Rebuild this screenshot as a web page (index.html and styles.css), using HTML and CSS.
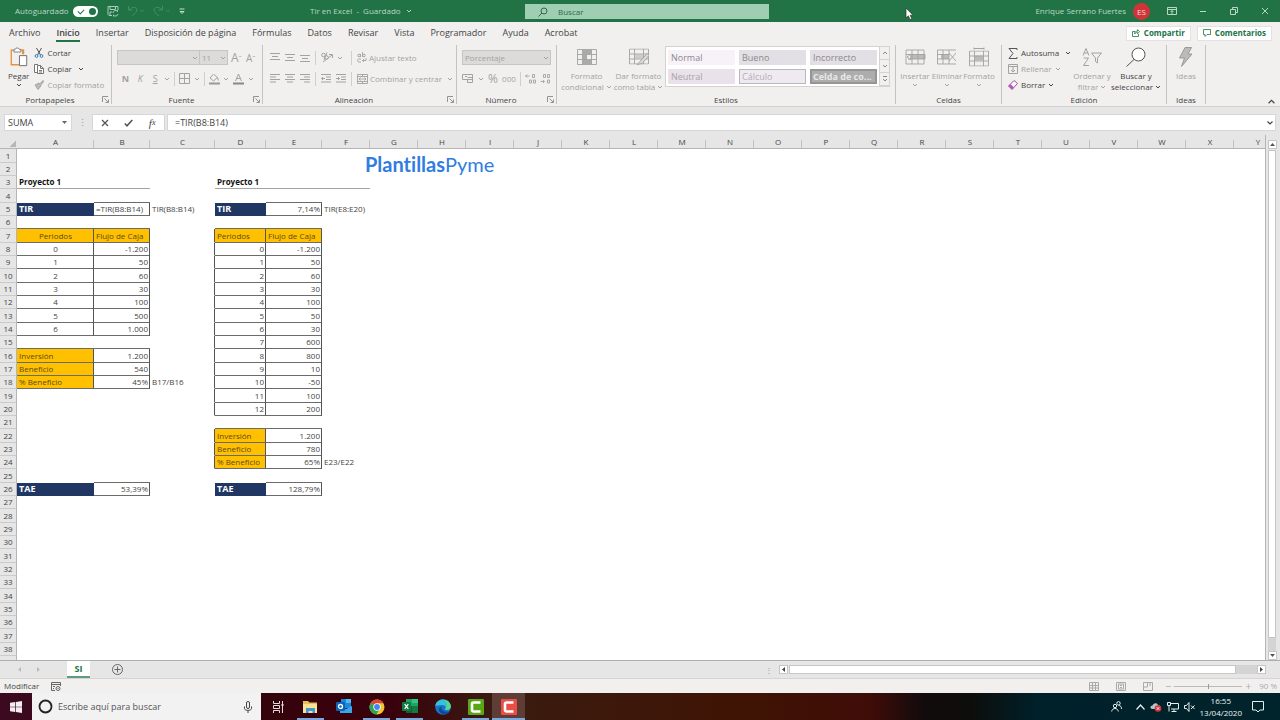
FILE: index.html
```html
<!DOCTYPE html>
<html lang="es">
<head>
<meta charset="utf-8">
<meta name="viewport" content="width=device-width, initial-scale=1">
<title>Tir en Excel</title>
<link rel="stylesheet" href="styles.css">
</head>
<body>
<svg class="defs" aria-hidden="true">
  <symbol id="car" viewBox="0 0 6 4"><path d="M1 1l2 2 2-2" fill="none" stroke="currentColor"/></symbol>
  <symbol id="launch" viewBox="0 0 7 7"><path d="M.5 6V.5H6M2.500 2.500l3.500 3.500M6.500 3.500v3h-3" fill="none" stroke="currentColor" stroke-width=".9"/></symbol>
  <symbol id="grid" viewBox="0 0 20 16"><path d="M.5.500h19v15H.5zM5.500.500v15M14.500.500v15M.5 5.500h19M.5 10.500h19" fill="none" stroke="currentColor" stroke-width=".9"/></symbol>
</svg>
<div class="app">
  <header class="titlebar">
    <div class="quick">
      <label class="auto">Autoguardado <input type="checkbox" class="switch" checked></label>
      <button aria-label="Guardar"><svg width="12" height="12" viewBox="0 0 12 12" fill="none" stroke="#a7cdb6"><path d="M5 10.500H2L1 9.500V1.500h10V5M3 1.500v3h5.500v-3M3 10V7h2M6 8a2.500 2.500 0 0 1 4.500-1.500V5M11 9a2.500 2.500 0 0 1-4.500 1v1.500"/></svg></button>
      <button class="dim" aria-label="Deshacer"><svg width="18" height="12" viewBox="0 0 18 12" fill="none" stroke="currentColor"><path d="M1.500 1v4h4M2 5c3-4 8-3 8 0 0 2-2 3-5 6M13.500 5l1.500 1.500L16.500 5"/></svg></button>
      <button class="dim" aria-label="Rehacer"><svg width="18" height="12" viewBox="0 0 18 12" fill="none" stroke="currentColor"><path d="M9.500 1v4h-4M9 5C6 1 1 2 1 5c0 2 2 3 5 6M13.500 5l1.500 1.500L16.500 5"/></svg></button>
      <button aria-label="Personalizar"><svg width="6" height="7" viewBox="0 0 6 7" fill="none" stroke="#c5dfce"><path d="M.5 1h5M1 3.500l2 2 2-2z"/></svg></button>
    </div>
    <button class="doc">Tir en Excel&nbsp; -&nbsp; Guardado <svg width="6" height="4"><use href="#car"/></svg></button>
    <label class="find"><svg width="10" height="10" viewBox="0 0 10 10" fill="none" stroke="#2c6b47"><circle cx="6" cy="4" r="3"/><path d="M4 6L.5 9.500"/></svg><input type="search" placeholder="Buscar" aria-label="Buscar"></label>
    <div class="window">
      <span>Enrique Serrano Fuertes</span><span class="avatar">ES</span>
      <button aria-label="Opciones de cinta"><svg width="10" height="8" viewBox="0 0 10 8" fill="none" stroke="#b8d8c4"><path d="M.5.500h9v7h-9zM.5 2.500h9M5 7V3.500M3.500 5L5 3.500 6.500 5"/></svg></button>
      <button aria-label="Minimizar"><svg width="8" height="8" viewBox="0 0 8 8" stroke="#b8d8c4"><path d="M1 4.500h6"/></svg></button>
      <button aria-label="Restaurar"><svg width="8" height="8" viewBox="0 0 8 8" fill="none" stroke="#b8d8c4"><path d="M.5 2.500h5v5h-5zM2.500 2V.5h5v5H6"/></svg></button>
      <button aria-label="Cerrar"><svg width="8" height="8" viewBox="0 0 8 8" stroke="#b8d8c4"><path d="M1 1l6 6M7 1L1 7"/></svg></button>
    </div>
    <svg class="pointer" width="9" height="14" viewBox="0 0 9 14"><path d="M1 1v10l2.300-2.200L5 12.500l1.800-.8L5.200 8.200H8z" fill="#fff" stroke="#333" stroke-width=".7"/></svg>
  </header>

  <nav class="tabs">
    <a href="#">Archivo</a><a href="#" class="on">Inicio</a><a href="#">Insertar</a><a href="#">Disposición de página</a><a href="#">Fórmulas</a><a href="#">Datos</a><a href="#">Revisar</a><a href="#">Vista</a><a href="#">Programador</a><a href="#">Ayuda</a><a href="#">Acrobat</a>
    <span class="fill"></span>
    <button class="pill"><svg width="8" height="8" viewBox="0 0 8 8" fill="none" stroke="currentColor" stroke-width=".8"><path d="M3 2.500H.5v5h6V5M2.500 5c0-2 1-2.800 3-2.800V.6L7.600 2.800 5.500 4.800V3.500C4 3.500 3 4 2.500 5z"/></svg>Compartir</button>
    <button class="pill"><svg width="8" height="8" viewBox="0 0 8 8" fill="none" stroke="currentColor" stroke-width=".8"><path d="M.5.500h7v5H4L2 7.500v-2H.5z"/></svg>Comentarios</button>
  </nav>

  <div class="ribbon">
    <section class="group clip">
      <div class="tools">
        <button class="big"><svg width="20" height="22" viewBox="0 0 20 22" fill="none"><path d="M3 3.500h-1.500v16H10M14 8V3.500h1.500" stroke="#e2953f" stroke-width="1.500"/><path d="M1.500 3.500h3M12 3.500h3V8" stroke="#e2953f" stroke-width="1.500"/><path d="M4.500 5.500v-3H6c0-2 4-2 4 0h2v3z" fill="#fff" stroke="#777"/><path d="M10.500 9.500h8v11h-8z" fill="#fff" stroke="#666"/></svg><span>Pegar</span><svg width="6" height="4"><use href="#car"/></svg></button>
        <div class="stack">
          <button><svg width="10" height="10" viewBox="0 0 10 10" fill="none"><path d="M2.500 0l4 7M7.500 0l-4 7" stroke="#555"/><circle cx="2.500" cy="8" r="1.400" stroke="#2f7fc4"/><circle cx="7.500" cy="8" r="1.400" stroke="#2f7fc4"/></svg>Cortar</button>
          <button><svg width="10" height="10" viewBox="0 0 10 10" fill="#fff" stroke="#666" stroke-width=".9"><path d="M3 8.500H.5v-8h3.500M3.500 1.500h3l3 3v5h-6zM6.500 1.500v3h3M5 6.500h3M5 8h3"/></svg>Copiar <svg class="gap" width="6" height="4"><use href="#car"/></svg></button>
          <button class="off"><svg width="10" height="10" viewBox="0 0 10 10" fill="#bbb" stroke="#999" stroke-width=".8"><path d="M1 5l4-2 2 3-3 3.500zM6 3.500L9 .5l.7 1L7 5"/></svg>Copiar formato</button>
        </div>
      </div>
      <footer>Portapapeles<svg width="7" height="7"><use href="#launch"/></svg></footer>
    </section>

    <section class="group font off">
      <div class="rows">
        <div class="line">
          <span class="combo wide"><select aria-label="Fuente"><option></option></select><svg width="6" height="4"><use href="#car"/></svg></span><span class="combo size"><select aria-label="Tamaño"><option>11</option></select><svg width="6" height="4"><use href="#car"/></svg></span>
          <button class="glyph">A<sup>ˆ</sup></button><button class="glyph small">A<sup>ˇ</sup></button>
        </div>
        <div class="line marks">
          <button><b>N</b></button><button><i>K</i></button><button><u>S</u></button><svg width="6" height="4"><use href="#car"/></svg><i class="bar"></i>
          <button aria-label="Bordes"><svg width="11" height="11" viewBox="0 0 11 11" fill="none" stroke="currentColor"><path d="M.5.500h10v10H.5zM5.500 1v9M1 5.500h9"/></svg></button><svg width="6" height="4"><use href="#car"/></svg><i class="bar"></i>
          <button aria-label="Relleno"><svg width="11" height="12" viewBox="0 0 11 12" fill="none" stroke="currentColor"><path d="M4.500 1L1 5l3.500 3L8.500 4.500 5 1.500M8.500 4.500l1 3" /><path d="M0 10.500h11" stroke="#999" stroke-width="2"/></svg></button><svg width="6" height="4"><use href="#car"/></svg>
          <button aria-label="Color de fuente"><svg width="11" height="12" viewBox="0 0 11 12" fill="none" stroke="currentColor"><path d="M2.500 8l3-7 3 7M3.500 5.500h4"/><path d="M0 10.500h11" stroke="#888" stroke-width="2"/></svg></button><svg width="6" height="4"><use href="#car"/></svg>
        </div>
      </div>
      <footer>Fuente<svg width="7" height="7"><use href="#launch"/></svg></footer>
    </section>

    <section class="group align off">
      <div class="rows">
        <div class="line">
          <svg width="10" height="9" viewBox="0 0 10 9" stroke="currentColor"><path d="M0 .5h10M2 3.500h6M0 6.500h10"/></svg>
          <svg width="10" height="9" viewBox="0 0 10 9" stroke="currentColor"><path d="M0 1.500h10M2 4.500h6M0 7.500h10"/></svg>
          <svg width="10" height="9" viewBox="0 0 10 9" stroke="currentColor"><path d="M0 2.500h10M2 5.500h6M0 8.500h10"/></svg><i class="bar"></i>
          <svg width="12" height="11" viewBox="0 0 12 11" fill="none" stroke="currentColor"><circle cx="2.500" cy="3" r="1.800"/><circle cx="5.500" cy="5.500" r="1.800"/><path d="M6 .5L3 8M2 10l9-7M8 2.500h3.500V6"/></svg><svg class="near" width="6" height="4"><use href="#car"/></svg><i class="bar push"></i>
          <button class="txt"><svg width="10" height="11" viewBox="0 0 10 11" fill="none" stroke="currentColor" stroke-width=".9"><circle cx="2" cy="3.500" r="1.300"/><path d="M3.500 2v3M5.500 0v5"/><circle cx="7" cy="3.500" r="1.300"/><path d="M4 7H2C0 7 0 10 2 10h2M9 6v2.500H5.500M7 7L5.500 8.500 7 10"/></svg>Ajustar texto</button>
        </div>
        <div class="line">
          <svg width="10" height="9" viewBox="0 0 10 9" stroke="currentColor"><path d="M0 .5h10M0 3h6M0 5.500h10M0 8h6"/></svg>
          <svg width="10" height="9" viewBox="0 0 10 9" stroke="currentColor"><path d="M0 .5h10M2 3h6M0 5.500h10M2 8h6"/></svg>
          <svg width="10" height="9" viewBox="0 0 10 9" stroke="currentColor"><path d="M0 .5h10M4 3h6M0 5.500h10M4 8h6"/></svg><i class="bar"></i>
          <svg width="10" height="9" viewBox="0 0 10 9" fill="none" stroke="currentColor"><path d="M0 .5h10M5 3h5M5 5.500h5M0 8h10M4 4.500H.5M2 3L.5 4.500 2 6"/></svg>
          <svg width="10" height="9" viewBox="0 0 10 9" fill="none" stroke="currentColor"><path d="M0 .5h10M5 3h5M5 5.500h5M0 8h10M0 4.500h3.500M2 3l1.500 1.500L2 6"/></svg><i class="bar"></i>
          <button class="txt"><svg width="11" height="10" viewBox="0 0 11 10" fill="none" stroke="currentColor" stroke-width=".9"><path d="M.5.500h10v9H.5zM.5 2.500h10M.5 7.500h10M5.500.500v2M5.500 7.500v2M2 5h7M3.500 3.500L2 5l1.500 1.500M7.500 3.500L9 5 7.500 6.500"/></svg>Combinar y centrar <svg class="gap" width="6" height="4"><use href="#car"/></svg></button>
        </div>
      </div>
      <footer>Alineación<svg width="7" height="7"><use href="#launch"/></svg></footer>
    </section>

    <section class="group num off">
      <div class="rows">
        <div class="line"><span class="combo"><select aria-label="Formato de número"><option>Porcentaje</option></select><svg width="6" height="4"><use href="#car"/></svg></span></div>
        <div class="line">
          <button aria-label="Moneda"><svg width="12" height="9" viewBox="0 0 12 9" fill="none" stroke="currentColor"><path d="M.5.500h10v5H.5zM5.500 5.500V8.500h5v-5h-5M3 2.500h2"/></svg></button><svg width="6" height="4"><use href="#car"/></svg>
          <button class="pct">%</button><button class="mil">000</button><i class="bar"></i>
          <button aria-label="Aumentar decimales"><svg width="11" height="10" viewBox="0 0 11 10" fill="none" stroke="currentColor" stroke-width=".9"><path d="M4.500 2H.5M2 .5L.5 2 2 3.500M7.500.500h2v3h-2zM4.500 6h2v3h-2zM8.500 6h2v3h-2z"/></svg></button>
          <button aria-label="Disminuir decimales"><svg width="11" height="10" viewBox="0 0 11 10" fill="none" stroke="currentColor" stroke-width=".9"><path d="M.5 7.500h4M3 6l1.500 1.500L3 9M3.500.500h2v3h-2zM7.500.500h2v3h-2zM7.500 6h2v3h-2z"/></svg></button>
        </div>
      </div>
      <footer>Número<svg width="7" height="7"><use href="#launch"/></svg></footer>
    </section>

    <section class="group styles">
      <div class="tools">
        <button class="big off"><svg width="20" height="16" viewBox="0 0 20 16"><path d="M6 1h8v4H6zM6 6h4v5H6zM6 11h8v4H6z" fill="#aaa"/><use href="#grid"/></svg><span>Formato<br>condicional <svg width="6" height="4"><use href="#car"/></svg></span></button>
        <button class="big off"><svg width="20" height="17" viewBox="0 0 20 17"><path d="M6 6h9v4H6z" fill="#ccc"/><use href="#grid" height="16"/><path d="M18 5l-7 8-3 3 5-1 7-8z" fill="#ddd" stroke="currentColor"/></svg><span>Dar formato<br>como tabla <svg width="6" height="4"><use href="#car"/></svg></span></button>
        <div class="gallery">
          <div class="swatches">
            <button class="s1">Normal</button><button class="s2">Bueno</button><button class="s2">Incorrecto</button>
            <button class="s3">Neutral</button><button class="s4">Cálculo</button><button class="s5">Celda de co...</button>
          </div>
          <div class="steps"><button aria-label="Arriba"><svg class="flip" width="6" height="4"><use href="#car"/></svg></button><button aria-label="Abajo"><svg width="6" height="4"><use href="#car"/></svg></button><button aria-label="Más"><svg width="6" height="6" viewBox="0 0 6 6" fill="none" stroke="currentColor"><path d="M1 .5h4M1 3l2 2 2-2"/></svg></button></div>
        </div>
      </div>
      <footer>Estilos</footer>
    </section>

    <section class="group cells off">
      <div class="tools">
        <button class="big"><svg width="21" height="16" viewBox="0 0 21 16"><path d="M5 5h15v5H5z" fill="#bbb"/><path d="M1 1h18v14H1zM7 1v14M13 1v14M1 5.500h19v4.500H3M6 5L2 8l4 3" fill="none" stroke="currentColor" stroke-width=".9"/></svg><span>Insertar</span><svg width="6" height="4"><use href="#car"/></svg></button>
        <button class="big"><svg width="20" height="16" viewBox="0 0 20 16"><path d="M4 5h8v5H4z" fill="#bbb"/><path d="M19 1H.5v14H19M6 1v14M12 1v14M.5 5.500H12M.5 10H12M12 4l7 8M19 4l-7 8" fill="none" stroke="currentColor" stroke-width=".9"/></svg><span>Eliminar</span><svg width="6" height="4"><use href="#car"/></svg></button>
        <button class="big"><svg width="20" height="19" viewBox="0 0 20 19"><path d="M6 8h8v5H6z" fill="#bbb"/><use href="#grid" y="3" height="16"/><path d="M5 1h10M5 0v2M15 0v2" stroke="currentColor"/></svg><span>Formato</span><svg width="6" height="4"><use href="#car"/></svg></button>
      </div>
      <footer>Celdas</footer>
    </section>

    <section class="group edit">
      <div class="tools">
        <div class="stack">
          <button><svg width="10" height="11" viewBox="0 0 10 11" fill="none" stroke="#555"><path d="M9 2V.5H1l4 5-4 5h8V9"/></svg>Autosuma <svg class="gap" width="6" height="4"><use href="#car"/></svg></button>
          <button class="off"><svg width="10" height="10" viewBox="0 0 10 10" fill="none" stroke="currentColor"><path d="M.5.500h9v9h-9zM.5 2.500h9M5 3v5M3 6l2 2 2-2"/></svg>Rellenar <svg width="6" height="4"><use href="#car"/></svg></button>
          <button><svg width="10" height="10" viewBox="0 0 10 10"><path d="M.5 6L6 .5l3.500 3L4 9.500z" fill="#fff" stroke="#a346a5"/><path d="M.5 6l2-2 3.500 3.500-2 2z" fill="#b657b8"/></svg>Borrar <svg width="6" height="4"><use href="#car"/></svg></button>
        </div>
        <button class="big off"><svg width="20" height="19" viewBox="0 0 20 19" fill="none" stroke="currentColor"><path d="M1 8l3-7 3 7M2 5.500h4M1.500 10.500h5l-5 7.500h5.500M9.500 5.500h10l-4 5v5l-2-1.500v-3.500z"/></svg><span>Ordenar y<br>filtrar <svg width="6" height="4"><use href="#car"/></svg></span></button>
        <button class="big"><svg width="20" height="20" viewBox="0 0 20 20" fill="#fff" stroke="#555"><circle cx="12.500" cy="7.500" r="6.500"/><path d="M8 12.500L.5 19.500"/></svg><span>Buscar y<br>seleccionar <svg width="6" height="4"><use href="#car"/></svg></span></button>
      </div>
      <footer>Edición</footer>
    </section>

    <section class="group ideas">
      <div class="tools"><button class="big off"><svg width="14" height="20" viewBox="0 0 14 20"><path d="M6 .5h6.500L9 7h4L2.500 19.500 5.500 11H.5z" fill="#bbb" stroke="#999"/></svg><span>Ideas</span></button></div>
      <footer>Ideas</footer>
    </section>
    <button class="fold" aria-label="Contraer la cinta"><svg class="flip" width="7" height="5" viewBox="0 0 6 4"><path d="M.5.500L3 3 5.500.500" fill="none" stroke="#444"/></svg></button>
  </div>

  <div class="formula">
    <label class="name"><input value="SUMA" aria-label="Cuadro de nombres"><svg width="5" height="3" viewBox="0 0 5 3"><path d="M0 0h5L2.500 3z" fill="#666"/></svg></label>
    <span class="dots">⋮</span>
    <div class="fx">
      <button aria-label="Cancelar"><svg width="8" height="8" viewBox="0 0 8 8" stroke="#555" stroke-width="1.300"><path d="M1 1l6 6M7 1L1 7"/></svg></button>
      <button aria-label="Introducir"><svg width="9" height="8" viewBox="0 0 9 8" fill="none" stroke="#555" stroke-width="1.600"><path d="M.8 4.500L3 6.800 8.300 1"/></svg></button>
      <button class="f">f<sub>x</sub></button>
    </div>
    <label class="expr"><input value="=TIR(B8:B14)" aria-label="Barra de fórmulas"><svg width="6" height="4" viewBox="0 0 6 4"><path d="M.5.500L3 3 5.500.500" fill="none" stroke="#444" stroke-width="1.200"/></svg></label>
  </div>

  <main class="work">
    <div class="sheet">
      <table>
        <colgroup><col class="c0"><col class="ca"><col class="cb"><col class="cc"><col class="cd"><col class="ce"><col span="20" class="cx"></colgroup>
        <thead><tr><th class="corner" aria-label="Seleccionar todo"></th><th>A</th><th>B</th><th>C</th><th>D</th><th>E</th><th>F</th><th>G</th><th>H</th><th>I</th><th>J</th><th>K</th><th>L</th><th>M</th><th>N</th><th>O</th><th>P</th><th>Q</th><th>R</th><th>S</th><th>T</th><th>U</th><th>V</th><th>W</th><th>X</th><th>Y</th></tr></thead>
        <tbody>
          <tr><th>1</th></tr>
          <tr><th>2</th></tr>
          <tr><th>3</th><td class="h">Proyecto 1</td><td class="h"></td><td></td><td class="h">Proyecto 1</td><td class="h"></td><td class="h"></td></tr>
          <tr><th>4</th><td></td><td class="u"></td><td></td><td></td><td class="u"></td></tr>
          <tr><th>5</th><td class="navy">TIR</td><td class="b">=TIR(B8:B14)</td><td>TIR(B8:B14)</td><td class="navy">TIR</td><td class="b n">7,14%</td><td>TIR(E8:E20)</td></tr>
          <tr><th>6</th><td class="u"></td><td class="u"></td><td></td><td class="u"></td><td class="u"></td></tr>
          <tr><th>7</th><td class="b y m">Periodos</td><td class="b y">Flujo de Caja</td><td class="r"></td><td class="b y">Periodos</td><td class="b y">Flujo de Caja</td></tr>
          <tr><th>8</th><td class="b m">0</td><td class="b n">-1.200</td><td class="r"></td><td class="b n">0</td><td class="b n">-1.200</td></tr>
          <tr><th>9</th><td class="b m">1</td><td class="b n">50</td><td class="r"></td><td class="b n">1</td><td class="b n">50</td></tr>
          <tr><th>10</th><td class="b m">2</td><td class="b n">60</td><td class="r"></td><td class="b n">2</td><td class="b n">60</td></tr>
          <tr><th>11</th><td class="b m">3</td><td class="b n">30</td><td class="r"></td><td class="b n">3</td><td class="b n">30</td></tr>
          <tr><th>12</th><td class="b m">4</td><td class="b n">100</td><td class="r"></td><td class="b n">4</td><td class="b n">100</td></tr>
          <tr><th>13</th><td class="b m">5</td><td class="b n">500</td><td class="r"></td><td class="b n">5</td><td class="b n">50</td></tr>
          <tr><th>14</th><td class="b m">6</td><td class="b n">1.000</td><td class="r"></td><td class="b n">6</td><td class="b n">30</td></tr>
          <tr><th>15</th><td class="u"></td><td class="u"></td><td class="r"></td><td class="b n">7</td><td class="b n">600</td></tr>
          <tr><th>16</th><td class="b y">Inversión</td><td class="b n">1.200</td><td class="r"></td><td class="b n">8</td><td class="b n">800</td></tr>
          <tr><th>17</th><td class="b y">Beneficio</td><td class="b n">540</td><td class="r"></td><td class="b n">9</td><td class="b n">10</td></tr>
          <tr><th>18</th><td class="b y">% Beneficio</td><td class="b n">45%</td><td class="r">B17/B16</td><td class="b n">10</td><td class="b n">-50</td></tr>
          <tr><th>19</th><td></td><td></td><td class="r"></td><td class="b n">11</td><td class="b n">100</td></tr>
          <tr><th>20</th><td></td><td></td><td class="r"></td><td class="b n">12</td><td class="b n">200</td></tr>
          <tr><th>21</th><td></td><td></td><td></td><td class="u"></td><td class="u"></td></tr>
          <tr><th>22</th><td></td><td></td><td class="r"></td><td class="b y">Inversión</td><td class="b n">1.200</td></tr>
          <tr><th>23</th><td></td><td></td><td class="r"></td><td class="b y">Beneficio</td><td class="b n">780</td></tr>
          <tr><th>24</th><td></td><td></td><td class="r"></td><td class="b y">% Beneficio</td><td class="b n">65%</td><td>E23/E22</td></tr>
          <tr><th>25</th><td></td><td class="u"></td><td></td><td></td><td class="u"></td></tr>
          <tr><th>26</th><td class="navy">TAE</td><td class="b n">53,39%</td><td></td><td class="navy">TAE</td><td class="b n">128,79%</td></tr>
          <tr><th>27</th></tr><tr><th>28</th></tr><tr><th>29</th></tr><tr><th>30</th></tr><tr><th>31</th></tr><tr><th>32</th></tr><tr><th>33</th></tr><tr><th>34</th></tr><tr><th>35</th></tr><tr><th>36</th></tr><tr><th>37</th></tr><tr><th>38</th></tr><tr><th></th></tr>
        </tbody>
      </table>
      <div class="brand"><b>Plantillas</b>Pyme</div>
    </div>
    <div class="vscroll"><button aria-label="Subir"><svg class="flip" width="5" height="3" viewBox="0 0 5 3"><path d="M0 0h5L2.500 3z" fill="#555"/></svg></button><div class="thumb"></div><div class="track"></div><button aria-label="Bajar"><svg width="5" height="3" viewBox="0 0 5 3"><path d="M0 0h5L2.500 3z" fill="#555"/></svg></button></div>
  </main>

  <div class="sheets">
    <div class="nav"><button aria-label="Anterior"><svg width="3" height="5" viewBox="0 0 3 5"><path d="M3 0v5L0 2.500z" fill="#bbb"/></svg></button><button aria-label="Siguiente"><svg width="3" height="5" viewBox="0 0 3 5"><path d="M0 0v5l3-2.500z" fill="#bbb"/></svg></button></div>
    <button class="tab">SI</button>
    <button class="add" aria-label="Nueva hoja"><svg width="11" height="11" viewBox="0 0 11 11" fill="none" stroke="#666"><circle cx="5.500" cy="5.500" r="5"/><path d="M5.500 2.500v6M2.500 5.500h6"/></svg></button>
    <span class="dots">⋮</span>
    <div class="hscroll"><button aria-label="Izquierda"><svg width="3" height="5" viewBox="0 0 3 5"><path d="M3 0v5L0 2.500z" fill="#444"/></svg></button><div class="thumb"></div><div class="track"></div><button aria-label="Derecha"><svg width="3" height="5" viewBox="0 0 3 5"><path d="M0 0v5l3-2.500z" fill="#444"/></svg></button></div>
  </div>

  <div class="status">
    <span>Modificar</span>
    <svg width="10" height="9" viewBox="0 0 10 9" fill="none" stroke="#666"><path d="M4 8.500H.5v-8h9V4M.5 2.500h9M2 4.500h2M2 6.500h1"/><circle cx="7" cy="6.500" r="2"/><path d="M6.500 6.500h1"/></svg>
    <span class="fill"></span>
    <button aria-label="Normal"><svg width="10" height="9" viewBox="0 0 10 9" fill="none" stroke="#aaa"><path d="M.5.500h9v8h-9zM3.500.500v8M6.500.500v8M.5 3.500h9M.5 6h9"/></svg></button>
    <button aria-label="Diseño de página"><svg width="10" height="9" viewBox="0 0 10 9" fill="none" stroke="#aaa"><path d="M.5.500h9v8h-9zM2.500 2h5v5h-5zM4 3.500h2M4 5.500h2"/></svg></button>
    <button aria-label="Salto de página"><svg width="10" height="9" viewBox="0 0 10 9" fill="none" stroke="#aaa"><path d="M.5.500h9v8h-9zM.5 5h4V.5M7 .5V4"/></svg></button>
    <div class="zoom"><span>−</span><input type="range" min="10" max="190" value="100" aria-label="Zoom"><span>+</span></div>
    <span class="level">90 %</span>
  </div>

  <footer class="taskbar">
    <button class="start" aria-label="Inicio"><svg width="12" height="12" viewBox="0 0 12 12" fill="#f4eef1"><path d="M0 1.800L5.300 1v4.700H0zM6 .9L12 0v5.700H6zM0 6.300h5.300V11L0 10.200zM6 6.300h6V12l-6-.9z"/></svg></button>
    <label class="cortana"><svg width="15" height="15" viewBox="0 0 15 15" fill="none" stroke="#222" stroke-width="1.800"><circle cx="7.500" cy="7.500" r="6"/></svg><input placeholder="Escribe aquí para buscar" aria-label="Escribe aquí para buscar"><svg width="8" height="12" viewBox="0 0 8 12" fill="none" stroke="#444"><rect x="2.500" y=".5" width="3" height="7" rx="1.500"/><path d="M.5 5.500v2C.5 10 7.500 10 7.500 7.500v-2M4 9.500V12"/></svg></label>
    <button class="app-i" aria-label="Vista de tareas"><svg width="12" height="12" viewBox="0 0 12 12" fill="none" stroke="#ddd"><path d="M1.500 0v2.500h6V0M1.500 12V9.500h6V12M1.500 4.500h6v3h-6zM10.500 0v12M9 4h3"/></svg></button>
    <button class="app-i run" aria-label="Explorador"><svg width="15" height="14" viewBox="0 0 15 14"><path d="M0 1h5l1.500 1.500H14V12H0z" fill="#e9bd58"/><path d="M0 4h14v9H0z" fill="#fbe193"/><path d="M3 13V8h9v5H9.500v-2h-4v2z" fill="#3c9bd6"/></svg></button>
    <button class="app-i" aria-label="Outlook"><svg width="16" height="15" viewBox="0 0 16 15"><path d="M5 0h10v9H5z" fill="#1c88dc"/><path d="M10 0h5v4h-5z" fill="#4dbcf4"/><path d="M4 7l6 3 6-3v7H4z" fill="#37a6ea"/><rect y="3" width="9" height="9" rx="1" fill="#0c63b8"/><circle cx="4.500" cy="7.500" r="2" fill="none" stroke="#fff" stroke-width="1.300"/></svg></button>
    <button class="app-i run" aria-label="Chrome"><svg width="16" height="16" viewBox="0 0 16 16"><circle cx="8" cy="8" r="7.500" fill="#f4c430"/><path d="M8 8L1.500 4.200A7.500 7.500 0 0 1 14.500 4.200H8z" fill="#dc4437"/><path d="M1.500 4.200A7.500 7.500 0 0 0 7.300 15.500L11 9.500 8 8z" fill="#2fa355"/><circle cx="8" cy="8" r="3.700" fill="#fff"/><circle cx="8" cy="8" r="2.900" fill="#4285f4"/></svg></button>
    <button class="app-i run" aria-label="Excel"><svg width="16" height="15" viewBox="0 0 16 15"><path d="M4 0h12v14H4z" fill="#21a366"/><path d="M10 0h6v4h-6z" fill="#33c481"/><path d="M4 7h6v7H4z" fill="#185c37"/><path d="M10 7h6v7h-6z" fill="#107c41"/><rect y="3" width="9" height="9" rx="1" fill="#107c41"/><path d="M2.700 5.200l3.600 4.600M6.300 5.200L2.700 9.800" stroke="#fff" stroke-width="1.200"/></svg></button>
    <button class="app-i" aria-label="Edge"><svg width="16" height="16" viewBox="0 0 16 16"><circle cx="8" cy="8" r="7.800" fill="#1b72c9"/><path d="M.3 7C1-1 14-2 15.800 7c.2 3-3 4.500-6 3.500 2-2 .5-4.500-2.500-4.500S1.500 7 .3 7z" fill="#35c1d6"/><path d="M10 1c4 1 6 4 5.800 7-.5 2.500-3 3.500-6 2.500 3-3 3-6 .2-9.500z" fill="#5bd68b"/><path d="M6.500 7.500c-1 3 2 6 7 5-3 4-8.500 3-9.500-1-.5-2 .8-3.500 2.500-4z" fill="#0c4a94"/></svg></button>
    <button class="app-i run" aria-label="Camtasia"><svg width="16" height="16" viewBox="0 0 16 16"><rect width="16" height="16" rx="1" fill="#5aa614"/><path d="M12.500 3.500H5.500a1.500 1.500 0 0 0-1.500 1.500v6a1.500 1.500 0 0 0 1.500 1.500h7" fill="none" stroke="#fff" stroke-width="2.600"/></svg></button>
    <button class="app-i run live" aria-label="Grabadora"><svg width="16" height="16" viewBox="0 0 16 16"><rect width="16" height="16" rx="1" fill="#ea4c46"/><path d="M12.500 3.500H5.500a1.500 1.500 0 0 0-1.500 1.500v6a1.500 1.500 0 0 0 1.500 1.500h7" fill="none" stroke="#fff" stroke-width="2.600"/></svg></button>
    <span class="fill"></span>
    <div class="tray">
      <svg class="people" width="11" height="11" viewBox="0 0 11 11" fill="none" stroke="#e6eef0"><circle cx="4" cy="5" r="1.700"/><path d="M.7 10.500C1 6.500 7 6.500 7.300 10.500"/><circle cx="7.500" cy="2.300" r="1.700"/><path d="M7.500 4.500c2 0 3 1 3 3.500"/></svg>
      <svg width="9" height="6" viewBox="0 0 9 6" fill="none" stroke="#e6eef0" stroke-width="1.200"><path d="M.5 5.500l4-4.500 4 4.500"/></svg>
      <svg width="12" height="10" viewBox="0 0 12 10"><path d="M2.500 7C-.5 7 0 3.500 2.500 3.500 3 1 7 0 8 3c3 0 3 4 0 4z" fill="#b9c3c7"/><circle cx="8" cy="6.500" r="3.300" fill="#d9343c"/><path d="M6.800 5.300l2.400 2.400M9.200 5.300L6.800 7.700" stroke="#fff"/></svg>
      <svg width="12" height="10" viewBox="0 0 12 10" fill="none" stroke="#e6eef0"><path d="M4 1.500h7.500v5.500H4M7 7v2.500M4.500 9.500h5M.5.500h3v3h-3zM2 3.500v6"/></svg>
      <svg width="11" height="10" viewBox="0 0 11 10" fill="none" stroke="#e6eef0"><path d="M.5 3.500h2l2.500-3v9l-2.500-3h-2zM7 3.500l3.500 3.500M10.500 3.500L7 7"/></svg>
      <time>16:55<br>13/04/2020</time>
      <svg width="12" height="12" viewBox="0 0 12 12" fill="none" stroke="#e6eef0"><path d="M.5.500h11v8.500H8L6 11 4 9H.5z"/></svg>
    </div>
  </footer>
</div>
</body>
</html>
```
FILE: styles.css
```css
* { box-sizing: border-box; }
body { margin: 0; font: 8px/12px "Open Sans", "Noto Sans", sans-serif; color: #444; overflow: hidden; }
button, input, select { font: inherit; color: inherit; border: 0; padding: 0; margin: 0; background: none; outline: 0; min-width: 0; }
button { display: flex; align-items: center; justify-content: center; white-space: nowrap; }
a { color: inherit; text-decoration: none; }
svg { flex: none; }
.defs { position: absolute; width: 0; height: 0; }
.fill { flex: 1; }
.flip { transform: rotate(180deg); }
.off { color: #a3a2a1; }
.app { display: flex; flex-direction: column; height: 100vh; }

/* Title bar */
.titlebar { position: relative; flex: none; display: grid; grid-template-columns: 310px 215px 244px 1fr; align-items: center; height: 22px; background: #217346; color: #b9d8c5; }
.quick { display: flex; align-items: center; gap: 8px; padding-left: 15px; }
.auto { display: flex; align-items: center; gap: 4px; margin-right: 1px; }
.switch { appearance: none; position: relative; width: 25px; height: 11px; border-radius: 6px; background: #fff; }
.switch::before { content: ""; position: absolute; left: 6px; top: 2px; width: 3px; height: 5px; border: solid #217346; border-width: 0 1px 1px 0; transform: rotate(45deg); }
.switch::after { content: ""; position: absolute; right: 2px; top: 2px; width: 7px; height: 7px; border-radius: 50%; background: #217346; }
.dim { color: #498c66; }
.doc { gap: 5px; justify-content: flex-start; }
.find { display: flex; align-items: center; gap: 10px; height: 15px; margin-top: 1px; padding-left: 13px; background: #a0ceb2; color: #2c6b47; }
.find input { flex: 1; appearance: none; }
input::placeholder { color: inherit; opacity: 1; }
.window { display: flex; align-items: center; justify-content: flex-end; padding-right: 11px; }
.window button { width: 31px; }
.window button:last-child { width: 8px; margin-left: 12px; }
.avatar { width: 17px; height: 17px; margin: 0 6px 0 7px; border-radius: 50%; background: #d13438; color: #f6dcdc; line-height: 17px; text-align: center; }
.pointer { position: absolute; left: 905px; top: 7px; }

/* Ribbon tabs */
.tabs { flex: none; display: flex; align-items: center; gap: 16px; height: 22px; padding: 0 8px 0 9px; background: #f1f0ef; font-size: 9px; }
.tabs a { height: 18px; padding-top: 3px; border-bottom: 2px solid transparent; white-space: nowrap; }
.tabs .on { font-weight: 600; border-color: #217346; }
.pill { gap: 4px; height: 15px; margin-left: -10px; padding: 0 5px; background: #fff; border: 1px solid #e3e2e1; color: #217346; font-size: 8px; font-weight: 700; }

/* Ribbon */
.ribbon { position: relative; flex: none; display: flex; height: 63px; background: #f1f0ef; border-bottom: 1px solid #d2d1d0; }
.group { flex: none; display: flex; flex-direction: column; margin: 1px 0 2px; border-right: 1px solid #c4c3c2; }
.group > footer { position: relative; height: 9px; line-height: 9px; text-align: center; color: #444; }
.group > footer svg { position: absolute; right: 2px; top: 1px; color: #888; }
.clip > footer, .font > footer, .align > footer, .num > footer { padding-right: 11px; }
.clip { width: 112px; }
.font { width: 151px; }
.align { width: 194px; }
.num { width: 100px; }
.styles { width: 339px; }
.cells { width: 106px; }
.edit { width: 165px; }
.ideas { width: 39px; }
.tools { flex: 1; display: flex; }
.big { flex-direction: column; justify-content: flex-start; height: 46px; padding-top: 2px; line-height: 11px; }
.big > svg:first-child { flex: none; height: 20px; margin-bottom: 3px; }
.big > span + svg { margin-top: 2px; }
.big span svg { margin-bottom: 1px; }
.stack { display: flex; flex-direction: column; }
.stack button { gap: 3px; height: 16px; justify-content: flex-start; }
.gap { margin-left: 3px; }
.clip .tools { padding-left: 8px; gap: 5px; }
.rows { flex: 1; display: flex; flex-direction: column; gap: 6px; padding-top: 5px; }
.line { display: flex; align-items: center; height: 15px; }
.bar { flex: none; width: 1px; height: 14px; background: #d0cfce; }
.combo { position: relative; display: flex; height: 15px; background: #dcdbda; border: 1px solid #c6c5c4; }
.combo select { flex: 1; appearance: none; padding-left: 2px; opacity: 1; }
.combo svg { position: absolute; right: 1px; top: 5px; }
.wide { width: 83px; }
.size { width: 29px; margin-left: -1px; }
.font .rows { padding-left: 5px; }
.glyph { margin-left: 3px; font-size: 12px; }
.glyph.small { font-size: 10px; margin-left: 4px; }
.glyph sup { font-size: 8px; line-height: 8px; }
.marks { justify-content: space-between; padding: 0 8px 0 3px; font-size: 9px; }
.marks button { width: 11px; }
.align .line { gap: 5px; padding-left: 7px; }
.align .push { margin-left: 3px; }
.align .near { margin-left: -1px; }
.txt { gap: 2px; }
.num .rows { padding: 5px 5px 0; }
.num .combo { flex: 1; }
.num .line { justify-content: space-between; }
.pct { font-size: 12px; }
.styles .tools { padding-left: 4px; gap: 1px; }
.styles .big { width: 51px; }
.gallery { display: flex; height: 41px; margin: 1px 0 0; border: 1px solid #d4d3d2; background: #fff; }
.swatches { display: grid; grid-template-columns: repeat(3, 67px); gap: 4px; padding: 3px 2px; color: #8b888c; font-size: 9px; }
.swatches button { height: 15px; padding-left: 3px; justify-content: flex-start; }
.s1 { background: #f7f1f8; }
.s2 { background: #e2e0e4; }
.swatches .s3 { background: #e9e2ea; color: #a8a3aa; }
.swatches .s4 { background: #efeaf1; border: 1px solid #bbb8bc; color: #b3aeb4; padding-left: 2px; }
.swatches .s5 { background: #aeadae; border: 2px solid #969596; color: #e8e8e8; font-weight: 700; padding-left: 1px; }
.steps { display: grid; grid-template-rows: repeat(3, 1fr); width: 10px; background: #f1f0ef; color: #888; }
.steps button { border-left: 1px solid #d4d3d2; border-bottom: 1px solid #d4d3d2; }
.cells .tools { padding-left: 3px; }
.cells .big { width: 32px; }
.edit .tools { padding-left: 6px; }
.edit .big { width: 44px; }
.edit .stack { width: 62px; }
.ideas .tools { justify-content: center; }
.fold { position: absolute; right: 5px; bottom: 2px; }

/* Formula bar */
.formula { flex: none; display: flex; align-items: center; height: 28px; padding: 3px 4px 0; background: #e6e6e6; font-size: 9px; }
.name, .fx, .expr { display: flex; align-items: center; height: 17px; background: #fff; border: 1px solid #d6d6d6; }
.name { width: 68px; padding: 0 4px 0 3px; }
.name input { flex: 1; width: 40px; }
.dots { width: 20px; text-align: center; color: #999; }
.fx { width: 73px; }
.fx button { flex: 1; }
.f { font: italic 11px "Liberation Serif", serif; }
.f sub { font-size: 8px; }
.expr { flex: 1; margin-left: 2px; padding: 0 2px 0 7px; }
.expr input { flex: 1; }

/* Worksheet */
.work { flex: 1; min-height: 0; display: flex; background: #e6e6e6; }
.sheet { position: relative; flex: 1; overflow: hidden; background: #fff; border-right: 1px solid #b5b5b5; }
table { table-layout: fixed; width: 1282px; border-spacing: 0; }
.c0 { width: 17px; } .ca { width: 77px; } .cb, .ce { width: 56px; } .cc { width: 65px; } .cd { width: 51px; } .cx { width: 48px; }
th, td { height: 13px; padding: 0; line-height: 12px; white-space: nowrap; }
tbody tr:nth-child(3n+1) > * { height: 14px; }
thead th { height: 14px; background: linear-gradient(#c2c2c2, #c2c2c2) right 5px / 1px 9px no-repeat #e6e6e6; border-bottom: 1px solid #b5b5b5; font-weight: 400; }
thead .corner { background: linear-gradient(135deg, transparent 50%, #b7b7b7 50%) 9px 5px / 7px 7px no-repeat #e6e6e6; }
tbody th { background: #e6e6e6; border-right: 1px solid #b5b5b5; border-bottom: 1px solid #cbcbcb; font-weight: 400; }
td { padding: 0 1px 0 2px; border-bottom: 1px solid transparent; }
.h { color: #111; font-weight: 700; border-bottom: 1px solid #a5a5a5; }
.u { border-bottom: 1px solid #6b6b6b; }
.r { border-right: 1px solid #555; }
.b { border-right: 1px solid #555; border-bottom: 1px solid #6b6b6b; }
.n { text-align: right; }
.m { text-align: center; }
.y { background: #ffc000; color: #5c4a17; }
.navy { background: #203764; color: #fff; font-size: 9px; font-weight: 700; }
.brand { position: absolute; left: 365px; top: 17px; font: 20px/24px Lato, sans-serif; font-variant-ligatures: none; color: #2f7de1; }
.vscroll { display: flex; flex-direction: column; width: 14px; padding: 5px 4px 0 2px; }
.vscroll button, .hscroll button { flex: none; width: 9px; height: 9px; background: #fff; border: 1px solid #c6c6c6; }
.vscroll .thumb { flex: 1; margin-top: 1px; background: #fff; border: 1px solid #c6c6c6; }
.vscroll .track { height: 13px; background: #d4d4d4; }

/* Sheet tabs */
.sheets { flex: none; display: flex; align-items: center; height: 19px; padding-right: 14px; background: #e6e6e6; border-top: 1px solid #a9b3ab; border-bottom: 1px solid #d4d4d4; }
.nav { display: flex; gap: 16px; width: 67px; padding-left: 18px; }
.tab { align-self: flex-start; width: 23px; height: 17px; background: #fff; border-bottom: 2px solid #5e9c7a; color: #217346; font-size: 9px; font-weight: 700; }
.add { margin: 0 auto 0 22px; }
.hscroll { display: flex; width: 38.5%; height: 9px; }
.hscroll .thumb { flex: 1; margin-left: 1px; background: #fff; border: 1px solid #c6c6c6; }
.hscroll .track { width: 21px; background: #d4d4d4; }

/* Status bar */
.status { flex: none; display: flex; align-items: center; height: 14px; padding: 0 3px 0 4px; background: #f1f0ef; }
.status > svg { margin-left: 12px; }
.status button { margin-right: 17px; }
.zoom { display: flex; align-items: center; gap: 3px; margin-left: -4px; color: #aaa; font-size: 10px; }
.zoom input { appearance: none; width: 68px; height: 9px; background: linear-gradient(#bbb, #bbb) 0 4px / 100% 1px no-repeat; }
.zoom input::-webkit-slider-thumb { appearance: none; width: 1px; height: 5px; background: #999; }
.level { margin-left: 8px; color: #aaa; }

/* Taskbar */
.taskbar { flex: none; display: flex; align-items: stretch; height: 27px; background: linear-gradient(90deg, #3b0a20 0, #35030c 21%, #38000c 30%, #3a1c10 39%, #3f1404 58%, #400c08 68%, #130b0c 72%, #0c0e0c 76%, #00202a 81%, #00242c); color: #eef4f5; }
.start { width: 32px; }
.cortana { display: flex; align-items: center; width: 229px; padding: 0 9px 0 6px; background: #f2f2f2; color: #555; font-size: 9px; }
.cortana input { flex: 1; margin-left: 5px; }
.app-i { position: relative; width: 33px; }
.run::after { content: ""; position: absolute; left: 3px; right: 3px; bottom: 0; height: 2px; background: #7ba7dc; }
.live { background: #5d3d35; }
.live::after { left: 0; right: 0; }
.tray { display: flex; align-items: center; gap: 5px; padding-right: 16px; }
.tray .people { margin-right: 9px; }
.tray time { margin: 0 5px 0 0; text-align: center; }
```
